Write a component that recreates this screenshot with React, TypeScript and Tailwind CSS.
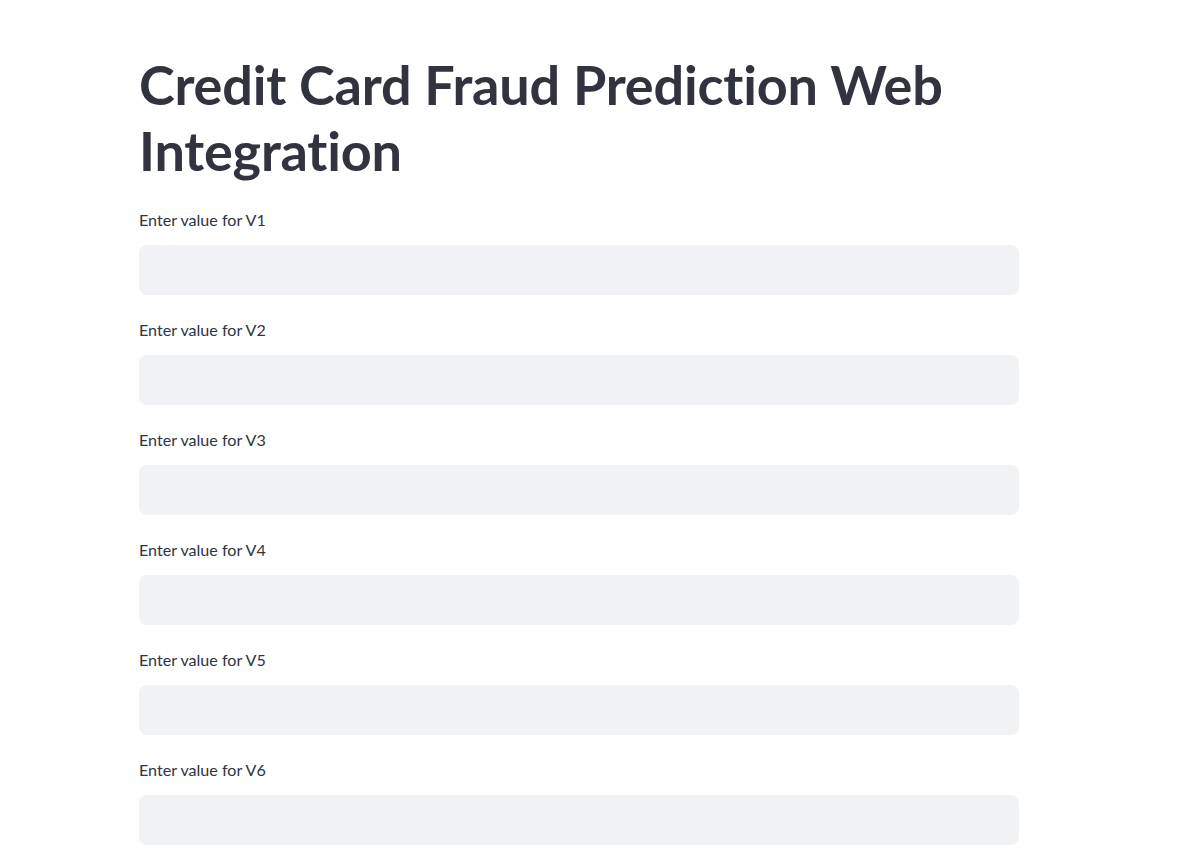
import React from 'react';

const fields = ['V1', 'V2', 'V3', 'V4', 'V5', 'V6'];

const App: React.FC = () => {
  return (
    <div className="min-h-screen bg-white font-['Lato','Noto_Sans',sans-serif] text-[#31333f]">
      <div className="ml-[139px] w-[880px] pt-[52px]">
        {/* Title */}
        <h1 className="text-[54px] font-bold leading-[66px] tracking-[-0.2px]">
          Credit Card Fraud Prediction Web Integration
        </h1>

        {/* Inputs */}
        <div className="mt-[24px] flex flex-col gap-[23px]">
          {fields.map((f) => (
            <div key={f}>
              <label className="block h-[37px] text-[16.1px] leading-[24px]">
                Enter value for {f}
              </label>
              <input
                type="text"
                className="block h-[50px] w-full rounded-lg bg-[#f0f2f6] px-3 outline-none"
              />
            </div>
          ))}
        </div>
      </div>
    </div>
  );
};

export default App;
